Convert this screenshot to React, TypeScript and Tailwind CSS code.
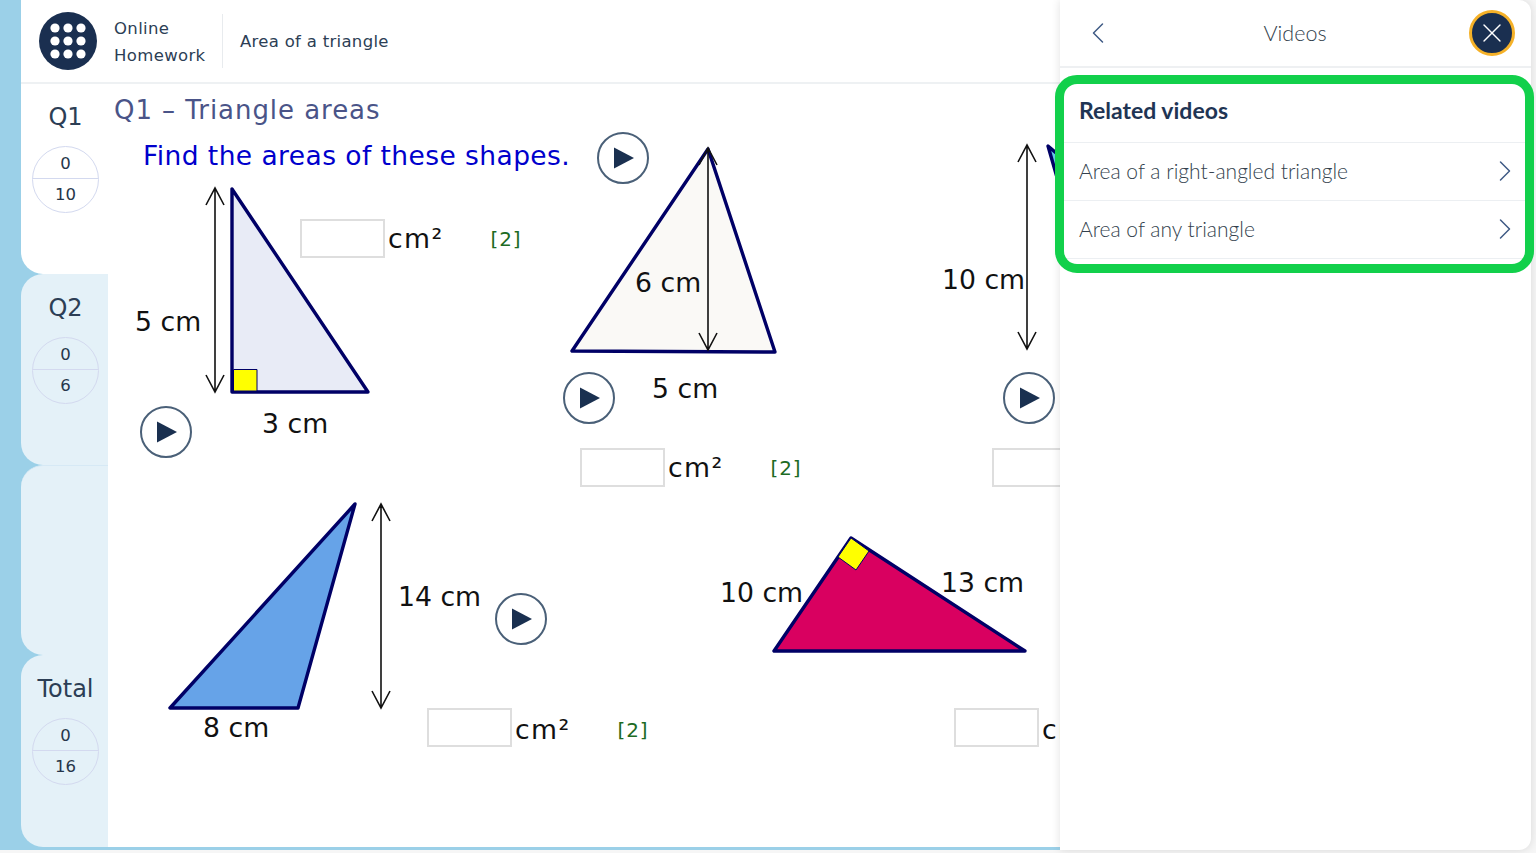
import { ChevronLeft, ChevronRight, X } from "lucide-react";

const verdana = "font-['DejaVu_Sans','Liberation_Sans',sans-serif]";

type ScoreProps = {
  label: string;
  score: number;
  total: number;
  className: string;
};

function ScoreCell({ label, score, total, className }: ScoreProps) {
  return (
    <div className={`flex flex-col items-center pl-[2px] ${className}`}>
      <p className="text-[24px] leading-[30px] text-[#2c3e55]">{label}</p>
      <div className="mt-[14px] flex h-[67px] w-[67px] flex-col rounded-full border border-[#d3d9ef] text-[16.5px] text-[#26364a]">
        <span className="flex h-[32px] items-end justify-center border-b border-[#d3d9ef] pb-[6px] leading-none">
          {score}
        </span>
        <span className="flex flex-1 items-center justify-center leading-none">{total}</span>
      </div>
    </div>
  );
}

function PlayButton({ className }: { className: string }) {
  return (
    <button
      type="button"
      aria-label="Play"
      className={`absolute flex h-[52px] w-[52px] items-center justify-center rounded-full border-2 border-[#4a6078] bg-white pl-[2px] ${className}`}
    >
      <svg width="22" height="22" viewBox="0 0 22 22">
        <path d="M1 0.500 L21 11 L1 21.500 Z" fill="#1a3050" />
      </svg>
    </button>
  );
}

function Label({ children, className }: { children: string; className: string }) {
  return (
    <span className={`absolute whitespace-nowrap text-[26.7px] leading-[32px] text-[#111] ${className}`}>
      {children}
    </span>
  );
}

function Answer({ className, mark = true }: { className: string; mark?: boolean }) {
  return (
    <div className={`absolute flex items-center whitespace-nowrap ${className}`}>
      <div className="h-[39px] w-[85px] border-2 border-[#dedede] bg-white" />
      <span className="ml-[3px] text-[26.7px] leading-[32px] tracking-[1.4px] text-[#111]">cm²</span>
      <span className={`ml-[47px] text-[20px] tracking-[0.8px] text-[#1d6b24] ${mark ? "" : "hidden"}`}>[2]</span>
    </div>
  );
}

function Arrow({ x, y1, y2 }: { x: number; y1: number; y2: number }) {
  return (
    <path
      d={`M${x} ${y1} V${y2} M${x - 9} ${y1 + 17} L${x} ${y1} L${x + 9} ${y1 + 17} M${x - 9} ${y2 - 17} L${x} ${y2} L${x + 9} ${y2 - 17}`}
      fill="none"
      stroke="#111"
      strokeWidth="1.6"
    />
  );
}

function VideoRow({ title }: { title: string }) {
  return (
    <div className="flex h-[58px] items-center justify-between border-b border-[#eceff2] pr-[15px] pb-[2px] pl-[19px]">
      <span className="text-[21px] font-light text-[#333f4d]">{title}</span>
      <ChevronRight size={36} strokeWidth={1} className="mr-[-7px] text-[#3f5a85]" />
    </div>
  );
}

export default function App() {
  return (
    <div className="relative flex h-[853px] w-[1536px] overflow-hidden bg-[#f6f6f6]">
      <main className={`flex h-[850px] w-[1064px] shrink-0 flex-col bg-[#9bd0e8] pb-[3px] pl-[21px] ${verdana}`}>
        <header className="flex h-[84px] shrink-0 items-center border-b-2 border-[#eef1f3] bg-white pl-[18px]">
          <svg width="58" height="58" viewBox="0 0 58 58" className="shrink-0">
            <circle cx="29" cy="29" r="29" fill="#1a2f50" />
            {[16, 29, 42].map((cy) =>
              [16, 29, 42].map((cx) => <circle key={`${cx}-${cy}`} cx={cx} cy={cy} r="4.6" fill="#fff" />),
            )}
          </svg>
          <p className="ml-[17px] w-[108px] pt-[2px] text-[16.5px] leading-[27px] tracking-[0.35px] text-[#2c3e55]">
            Online
            <br />
            Homework
          </p>
          <div className="h-[54px] w-px bg-[#e8ebee]" />
          <p className="ml-[17px] pt-[3px] text-[16.5px] tracking-[0.3px] text-[#2c3e55]">Area of a triangle</p>
        </header>

        <div className="flex min-h-0 flex-1">
          <aside className="flex w-[87px] shrink-0 flex-col">
            <ScoreCell label="Q1" score={0} total={10} className="h-[190px] rounded-bl-[22px] bg-white pt-[18px]" />
            <ScoreCell label="Q2" score={0} total={6} className="h-[191px] rounded-l-[22px] bg-[#e4f1f8] pt-[19px]" />
            <div className="h-[190px] rounded-l-[22px] border-t border-[#d6e9f5] bg-[#e4f1f8]" />
            <ScoreCell label="Total" score={0} total={16} className="flex-1 rounded-l-[22px] bg-[#e4f1f8] pt-[19px]" />
          </aside>

          <section className="relative min-w-0 flex-1 overflow-hidden bg-white">
            <h1 className="ml-[6px] mt-[9px] text-[26px] leading-[34px] tracking-[0.95px] text-[#4a5488]">
              Q1 – Triangle areas
            </h1>
            <p className="ml-[35px] mt-[12px] text-[26.5px] leading-[34px] tracking-[0.42px] text-[#0000cc]">
              Find the areas of these shapes.
            </p>

            <svg width="952" height="766" viewBox="108 84 952 766" className="absolute top-0 left-0">
              <g stroke="#000066" strokeWidth="3.4" strokeLinejoin="round">
                <path d="M232 189 V392 H368 Z" fill="#e8ebf6" />
                <path d="M708 149 L572 351 L775 352 Z" fill="#faf9f6" />
                <path d="M1048 146 L1075 240 L1100 190 Z" fill="#66c5e8" />
                <path d="M355 504 L170 708 H298 Z" fill="#66a3e8" />
                <path d="M851 538 L774 651 H1025 Z" fill="#d90060" />
              </g>
              <path d="M233.500 369.500 H257 V391 H233.500 Z" fill="#ffff00" stroke="#000066" strokeWidth="1" />
              <path d="M851 538 L869 551 L856 570 L838 557 Z" fill="#ffff00" stroke="#000066" strokeWidth="1" />
              <Arrow x={215} y1={188} y2={392} />
              <Arrow x={708} y1={148} y2={350} />
              <Arrow x={1027} y1={145} y2={349} />
              <Arrow x={381} y1={504} y2={708} />
            </svg>

            <Label className="left-[27px] top-[222px]">5 cm</Label>
            <Label className="left-[154px] top-[324px]">3 cm</Label>
            <Label className="left-[527px] top-[183px]">6 cm</Label>
            <Label className="left-[544px] top-[289px]">5 cm</Label>
            <Label className="left-[834px] top-[180px]">10 cm</Label>
            <Label className="left-[290px] top-[497px]">14 cm</Label>
            <Label className="left-[95px] top-[628px]">8 cm</Label>
            <Label className="left-[612px] top-[493px]">10 cm</Label>
            <Label className="left-[833px] top-[483px]">13 cm</Label>

            <Answer className="left-[192px] top-[135px]" />
            <Answer className="left-[472px] top-[364px]" />
            <Answer className="left-[884px] top-[364px]" mark={false} />
            <Answer className="left-[319px] top-[624px] [&>span]:translate-y-[2px]" />
            <Answer className="left-[846px] top-[624px] [&>span]:translate-y-[2px]" mark={false} />

            <PlayButton className="left-[489px] top-[48px]" />
            <PlayButton className="left-[455px] top-[288px]" />
            <PlayButton className="left-[895px] top-[288px]" />
            <PlayButton className="left-[32px] top-[322px]" />
            <PlayButton className="left-[387px] top-[509px]" />
          </section>
        </div>
      </main>

      <aside className="absolute top-0 left-[1060px] h-[850px] w-[471px] rounded-r-[12px] bg-white font-['Lato',sans-serif] shadow-[0_0_10px_rgba(0,0,0,0.12)]">
        <div className="flex h-[68px] items-center justify-between border-b-2 border-[#eef0f2] pr-[16px] pl-[20px]">
          <ChevronLeft size={36} strokeWidth={1} className="text-[#3f5a85]" />
          <h2 className="pl-[5px] text-[21.500px] font-light text-[#333f4d]">Videos</h2>
          <button
            type="button"
            aria-label="Close"
            className="flex h-[46px] w-[46px] items-center justify-center rounded-full border-[3px] border-[#f5b128] bg-[#1a2f50] text-white"
          >
            <X size={32} strokeWidth={1} />
          </button>
        </div>
        <div className="mt-[17px]">
          <h3 className="flex h-[58px] items-center border-b border-[#eceff2] pb-[6px] pl-[19px] text-[23px] font-bold text-[#1f3554]">
            Related videos
          </h3>
          <VideoRow title="Area of a right-angled triangle" />
          <VideoRow title="Area of any triangle" />
        </div>
        <div className="absolute top-[75px] left-[-5px] h-[198px] w-[479px] rounded-[22px] border-[9px] border-[#12d04b]" />
      </aside>
    </div>
  );
}
